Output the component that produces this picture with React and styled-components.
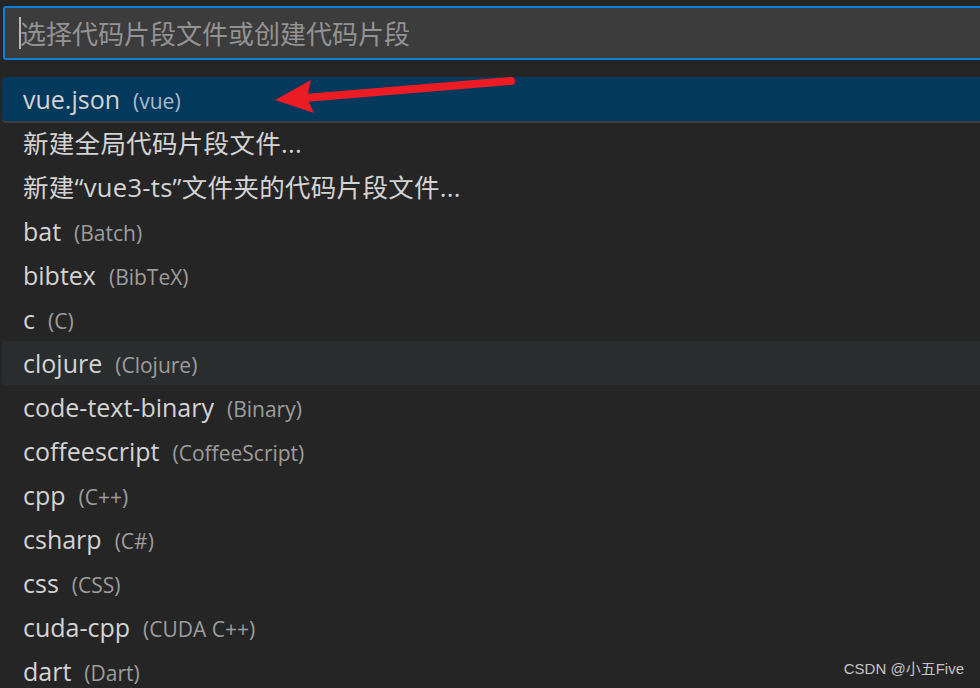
import React from "react";
import styled, { createGlobalStyle } from "styled-components";

const GlobalStyle = createGlobalStyle`
  html, body {
    margin: 0;
    padding: 0;
    background: #252526;
    overflow: hidden;
  }
`;

const items = [
  { label: "vue.json", desc: "(vue)", state: "selected" },
  { label: "新建全局代码片段文件...", cjk: true },
  { label: "新建“vue3-ts”文件夹的代码片段文件...", cjk: true },
  { label: "bat", desc: "(Batch)" },
  { label: "bibtex", desc: "(BibTeX)" },
  { label: "c", desc: "(C)" },
  { label: "clojure", desc: "(Clojure)", state: "hover" },
  { label: "code-text-binary", desc: "(Binary)" },
  { label: "coffeescript", desc: "(CoffeeScript)" },
  { label: "cpp", desc: "(C++)" },
  { label: "csharp", desc: "(C#)" },
  { label: "css", desc: "(CSS)" },
  { label: "cuda-cpp", desc: "(CUDA C++)" },
  { label: "dart", desc: "(Dart)" },
];

const App = () => {
  return (
    <Page>
      <GlobalStyle />
      <InputBox>
        <Caret />
        <Placeholder>选择代码片段文件或创建代码片段</Placeholder>
      </InputBox>
      <List>
        {items.map((item) => (
          <Row key={item.label} $state={item.state}>
            <Label $cjk={item.cjk}>{item.label}</Label>
            {item.desc && <Desc $selected={item.state === "selected"}>{item.desc}</Desc>}
          </Row>
        ))}
        <Arrow viewBox="0 0 250 40" width="250" height="40">
          <line x1="30" y1="21" x2="236" y2="4" stroke="#ec1c24" strokeWidth="8" strokeLinecap="round" />
          <polygon points="0,23 36,3 32,21 39,36" fill="#ec1c24" />
        </Arrow>
      </List>
      <Watermark>CSDN @小五Five</Watermark>
    </Page>
  );
};

const Page = styled.div`
  position: relative;
  width: 980px;
  height: 688px;
  overflow: hidden;
  background: #252526;
  padding-top: 6px;
  box-sizing: border-box;
  font-family: "Open Sans", "Noto Sans CJK SC", sans-serif;
`;

const InputBox = styled.div`
  margin-left: 3px;
  height: 54px;
  width: 1000px;
  box-sizing: border-box;
  border: 2px solid #0a7fd6;
  border-radius: 3px;
  background: #3c3c3c;
  display: flex;
  align-items: center;
  padding-left: 14px;
`;

const Caret = styled.span`
  width: 2px;
  height: 32px;
  background: #b8b8b8;
  margin-right: -1px;
`;

const Placeholder = styled.span`
  font-family: "Noto Sans CJK SC", sans-serif;
  font-size: 26px;
  color: #939393;
  line-height: 1;
`;

const List = styled.div`
  position: relative;
  margin-top: 17px;
  display: flex;
  flex-direction: column;
`;

const Row = styled.div`
  height: 44px;
  line-height: 44px;
  padding-left: 21px;
  margin-left: 2px;
  border-radius: 4px 0 0 4px;
  background: ${({ $state }) =>
    $state === "selected" ? "#04395e" : $state === "hover" ? "#2a2d2e" : "transparent"};
  box-shadow: ${({ $state }) => ($state === "selected" ? "0 2px 0 #3a3d41" : "none")};
  white-space: nowrap;
`;

const Label = styled.span`
  font-size: ${({ $cjk }) => ($cjk ? "25.5px" : "25px")};
  letter-spacing: ${({ $cjk }) => ($cjk ? "0.3px" : "0")};
  color: #d4d4d4;
`;

const Desc = styled.span`
  font-size: 21px;
  margin-left: 13px;
  color: ${({ $selected }) => ($selected ? "#a9bccd" : "#9d9d9d")};
`;

const Arrow = styled.svg`
  position: absolute;
  left: 275px;
  top: 0px;
`;

const Watermark = styled.div`
  position: absolute;
  right: 16px;
  bottom: 10px;
  font-family: "Liberation Sans", "Noto Sans CJK SC", sans-serif;
  font-size: 15px;
  color: #c4c4c4;
`;

export default App;
